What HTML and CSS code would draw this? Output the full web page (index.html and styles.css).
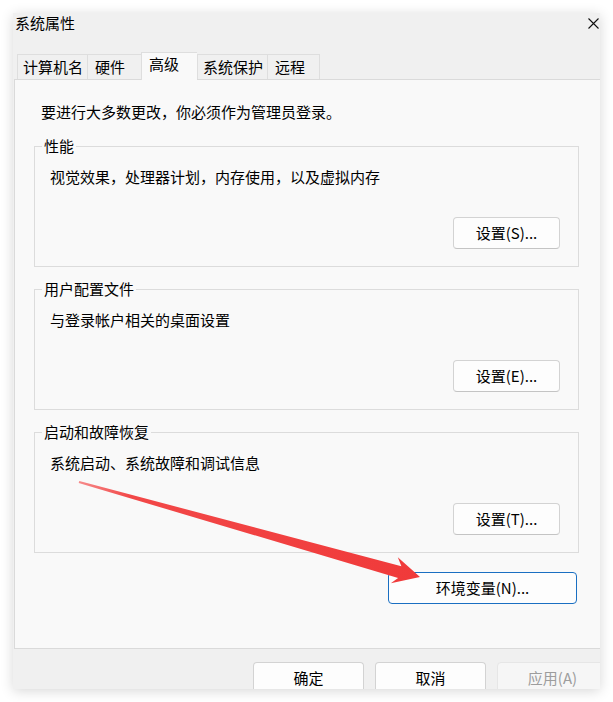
FILE: index.html
```html
<!DOCTYPE html>
<html lang="zh-CN">
<head>
<meta charset="utf-8">
<title>系统属性</title>
<link rel="stylesheet" href="styles.css">
</head>
<body>
<div class="window">
  <div class="titlebar">
    <span class="title">系统属性</span>
    <svg class="close" width="11" height="11" viewBox="0 0 11 11"><path d="M0.5 0.5 L10.5 10.5 M10.5 0.5 L0.5 10.5" stroke="#111" stroke-width="1.1" fill="none"/></svg>
  </div>
  <div class="tabs">
    <div class="tab tab-w70">计算机名</div>
    <div class="tab tab-w54">硬件</div>
    <div class="tab tab-w56 tab-active">高级</div>
    <div class="tab tab-w70">系统保护</div>
    <div class="tab tab-w52 tab-last">远程</div>
  </div>
  <div class="panel">
    <p class="notice">要进行大多数更改，你必须作为管理员登录。</p>
    <fieldset class="group">
      <legend>性能</legend>
      <p class="desc">视觉效果，处理器计划，内存使用，以及虚拟内存</p>
      <div class="group-actions"><button class="btn btn-set">设置(S)...</button></div>
    </fieldset>
    <fieldset class="group">
      <legend>用户配置文件</legend>
      <p class="desc">与登录帐户相关的桌面设置</p>
      <div class="group-actions"><button class="btn btn-set">设置(E)...</button></div>
    </fieldset>
    <fieldset class="group">
      <legend>启动和故障恢复</legend>
      <p class="desc">系统启动、系统故障和调试信息</p>
      <div class="group-actions"><button class="btn btn-set">设置(T)...</button></div>
    </fieldset>
    <div class="env-row"><button class="btn btn-env">环境变量(N)...</button></div>
  </div>
  <div class="footer">
    <button class="btn btn-foot">确定</button>
    <button class="btn btn-foot">取消</button>
    <button class="btn btn-foot btn-disabled">应用(A)</button>
  </div>
</div>
<svg class="arrow" width="613" height="702" viewBox="0 0 613 702">
  <defs>
    <linearGradient id="ag" x1="79" y1="482" x2="419" y2="577" gradientUnits="userSpaceOnUse">
      <stop offset="0" stop-color="#f68a8a"/>
      <stop offset="0.15" stop-color="#f24848"/>
      <stop offset="1" stop-color="#f03a3a"/>
    </linearGradient>
  </defs>
  <polygon points="79.3,481 401.4,566.3 397.8,557.2 420,577 390.8,583.3 398.1,577.9 78.7,483" fill="url(#ag)"/>
</svg>
</body>
</html>
```

FILE: styles.css
```css
* { box-sizing: border-box; }

html, body {
  margin: 0;
  padding: 0;
  background: #ffffff;
}

body {
  font-family: "Noto Sans CJK SC", "Noto Sans", sans-serif;
  font-size: 15px;
  color: #000;
  position: relative;
  width: 613px;
  height: 702px;
  overflow: hidden;
}

.window {
  margin: 13px 0 0 13px;
  width: 587px;
  height: 676px;
  background: #f0f0f0;
  box-shadow: 0 2px 12px rgba(0, 0, 0, 0.16);
  overflow: hidden;
  display: flex;
  flex-direction: column;
}

.titlebar {
  height: 20px;
  display: flex;
  align-items: center;
  justify-content: space-between;
  padding-left: 2px;
  padding-right: 1px;
  line-height: 20px;
}

.close {
  display: block;
  margin-top: 1px;
}

.tabs {
  margin-top: 19px;
  height: 27px;
  display: flex;
  align-items: flex-end;
  padding-left: 4px;
}

.tab {
  height: 25px;
  padding: 2px 0 0 6px;
  line-height: 20px;
  border: 1px solid #dedede;
  border-right: none;
  border-bottom: none;
  background: #f0f0f0;
  white-space: nowrap;
}

.tab-w70 { width: 70px; padding-left: 5px; }
.tab-w54 { width: 54px; padding-left: 7px; }
.tab-w56 { width: 56px; padding-left: 7px; }
.tab-w52 { width: 52px; padding-left: 7px; }

.tab-last {
  border-right: 1px solid #dedede;
  width: 53px;
}

.tab-active {
  height: 28px;
  margin-bottom: -1px;
  padding-top: 1px;
  background: #f9f9f9;
  position: relative;
  z-index: 1;
  border-color: #dedede;
}

.panel {
  margin-left: 1px;
  height: 570px;
  flex: none;
  background: #f9f9f9;
  border: 1px solid #dadada;
  border-right: none;
  padding: 22px 0 0 19px;
}

.notice {
  margin: 0 0 14px 7px;
  line-height: 20px;
}

.group {
  margin: 0 0 12px 0;
  width: 545px;
  min-width: 0;
  padding: 11px 18px 17px 15px;
  border: 1px solid #dcdcdc;
}

.group legend {
  padding: 0 2px;
  margin-left: -8px;
  line-height: 20px;
}

.desc {
  margin: 0;
  line-height: 20px;
}

.group-actions {
  margin-top: 30px;
  display: flex;
  justify-content: flex-end;
}

.btn {
  font-family: inherit;
  font-size: 15px;
  color: #000;
  height: 32px;
  padding: 0;
  background: #fdfdfd;
  border: 1px solid #d3d3d3;
  border-bottom-color: #c4c4c4;
  border-radius: 4px;
  line-height: 20px;
}

.btn-set {
  width: 107px;
}

.env-row {
  margin-top: 19px;
  width: 545px;
  display: flex;
  justify-content: flex-end;
  padding-right: 2px;
}

.btn-env {
  width: 189px;
  border: 1px solid #1a6fc2;
}

.footer {
  margin-top: 13px;
  padding-left: 240px;
  display: flex;
  gap: 11px;
  flex: none;
}

.btn-foot {
  width: 111px;
  flex: none;
}

.btn-disabled {
  color: #9d9d9d;
  background: #f6f6f6;
  border-color: #e6e6e6;
}

.arrow {
  position: absolute;
  left: 0;
  top: 0;
  pointer-events: none;
}
```
